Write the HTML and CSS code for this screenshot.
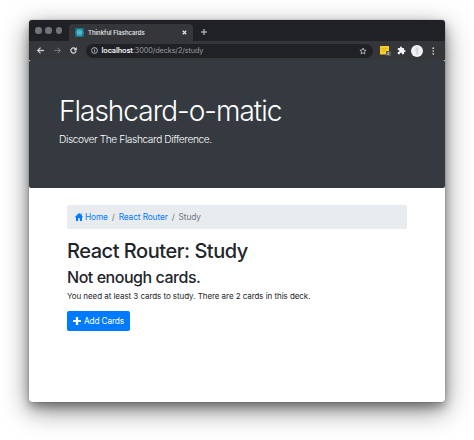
FILE: index.html
```html
<!DOCTYPE html>
<html lang="en">
<head>
  <meta charset="UTF-8" />
  <meta name="viewport" content="width=device-width, initial-scale=1.0" />
  <title>Thinkful Flashcards</title>
  <link rel="stylesheet" href="styles.css">
</head>
<body>
  <div class="window">
    <div class="tab-bar">
      <div class="lights"><i></i><i></i><i></i></div>
      <div class="tab">
        <svg class="favicon" viewBox="0 0 18 18">
          <rect width="18" height="18" rx="1" fill="#176d80" />
          <g fill="none" stroke="#68d3e8" stroke-width="1.2">
            <ellipse cx="9" cy="9" rx="7" ry="3" />
            <ellipse cx="9" cy="9" rx="7" ry="3" transform="rotate(60 9 9)" />
            <ellipse cx="9" cy="9" rx="7" ry="3" transform="rotate(120 9 9)" />
          </g>
          <circle cx="9" cy="9" r="2" fill="#68d3e8" />
        </svg>
        <span class="tab-title">Thinkful Flashcards</span>
        <svg class="tab-close" viewBox="0 0 10 10"><path d="M1.5 1.5l7 7m0-7l-7 7" stroke="#e8eaed" stroke-width="2.2" /></svg>
      </div>
      <svg class="new-tab" viewBox="0 0 12 12"><path d="M6 0v12M0 6h12" stroke="#d5d7da" stroke-width="2" /></svg>
    </div>
    <div class="toolbar">
      <svg class="nav-icon" viewBox="0 0 24 24"><path fill="#e8eaed" d="M21 11H6.8l5.6-5.6L11 4l-8 8 8 8 1.4-1.4L6.8 13H21z" stroke="#e8eaed" /></svg>
      <svg class="nav-icon" viewBox="0 0 24 24"><path fill="#85888c" d="M3 11h14.2l-5.6-5.6L13 4l8 8-8 8-1.4-1.4 5.6-5.6H3z" /></svg>
      <svg class="nav-icon" viewBox="0 0 24 24"><path fill="#e8eaed" stroke="#e8eaed" d="M17.7 6.3A8 8 0 1 0 19.7 14h-2.1A6 6 0 1 1 12 6c1.7 0 3.1.7 4.2 1.8L13 11h7V4z" /></svg>
      <div class="address">
        <svg class="info" viewBox="0 0 14 14"><circle cx="7" cy="7" r="5.8" fill="none" stroke="#d5d7da" stroke-width="1.6" /><path d="M7 6.2v4M7 3.6v1.5" stroke="#d5d7da" stroke-width="1.6" /></svg>
        <span class="url"><b>localhost</b>:3000/decks/2/study</span>
        <svg class="star" viewBox="0 0 24 24"><path fill="none" stroke="#c8cacd" stroke-width="2.4" stroke-linejoin="round" d="M12 3l2.6 6.2 6.7.6-5.1 4.4 1.6 6.6-5.8-3.5-5.8 3.5 1.6-6.6-5.1-4.4 6.7-.6z" /></svg>
      </div>
      <div class="note">
        <svg viewBox="0 0 18 18"><path fill="#f7ce27" d="M0 0h18v12l-5 5H0z" /><path d="M3 5h12M3 9h9" stroke="#d9ab14" stroke-width="1.5" /></svg>
        <span class="note-count">4</span>
      </div>
      <svg class="puzzle" viewBox="0 0 24 24"><path fill="#f1f3f4" d="M20.5 11H19V7a2 2 0 0 0-2-2h-4V3.500a2.500 2.500 0 0 0-5 0V5H4a2 2 0 0 0-2 2v3.800h1.500a2.700 2.700 0 0 1 0 5.400H2V20a2 2 0 0 0 2 2h3.800v-1.500a2.700 2.700 0 0 1 5.400 0V22H17a2 2 0 0 0 2-2v-4h1.500a2.500 2.500 0 0 0 0-5z" /></svg>
      <svg class="avatar" viewBox="0 0 12 12"><circle cx="6" cy="6" r="6" fill="#f0f1f2" /><path d="M5 2.500c2-1 3.500 1 2.500 3L7 9.500 5.500 10 5 7 4 5z" fill="#d4d7da" /></svg>
      <svg class="more" viewBox="0 0 4 14"><g fill="#d5d7da"><circle cx="2" cy="2" r="1.500" /><circle cx="2" cy="7" r="1.500" /><circle cx="2" cy="12" r="1.500" /></g></svg>
    </div>

    <header class="jumbotron">
      <h1>Flashcard-o-matic</h1>
      <p>Discover The Flashcard Difference.</p>
    </header>

    <main class="container">
      <nav class="breadcrumb">
        <a href="#">
          <svg class="home" viewBox="0 0 8 8"><path fill="#007bff" d="M4 0l1.700 1.600V.6h1v2L8 4 7.500 4.600 7 4.200V8H4.900V5.300H3.100V8H1V4.200l-.5.4L0 4z" /></svg><span>Home</span>
        </a>
        <span class="slash">/</span>
        <a href="#" class="deck">React Router</a>
        <span class="slash">/</span>
        <span class="active">Study</span>
      </nav>
      <h2>React Router: Study</h2>
      <h3>Not enough cards.</h3>
      <p>You need at least 3 cards to study. There are 2 cards in this deck.</p>
      <button type="button">
        <svg viewBox="0 0 8 8"><path d="M4 0v8M0 4h8" stroke="#fff" stroke-width="2.2" /></svg>
        <span>Add Cards</span>
      </button>
    </main>
  </div>
</body>
</html>
```
FILE: styles.css
```css
* { box-sizing: border-box; margin: 0; padding: 0; }
body {
  font-family: Inter, sans-serif;
  background: #fff; color: #212529;
  height: 440px; overflow: hidden;
  padding: 20px 29px 38px;
}
svg { display: block; flex: none; }
.window {
  width: 416px; height: 382px;
  background: #fff; border-radius: 3px;
  box-shadow: 0 0 1px rgba(0, 0, 0, 0.7), 0 8px 26px rgba(0, 0, 0, 0.5), 0 5px 10px rgba(0, 0, 0, 0.3);
  overflow: hidden;
}
.tab-bar {
  height: 21px; background: #1f2124;
  display: flex; align-items: flex-end;
}
.lights { display: flex; gap: 3.800px; width: 40px; padding: 0 0 7.500px 6px; }
.lights i { width: 6.500px; height: 6.500px; border-radius: 50%; background: #727376; }
.tab {
  width: 124px; height: 17px; padding: 0 6px;
  background: #35363a; border-radius: 4px 4px 0 0;
  display: flex; align-items: center;
}
.favicon { width: 9px; height: 9px; margin-right: 4px; }
.tab-title { color: #eceef0; font-size: 6px; font-weight: 500; letter-spacing: 0.02px; white-space: nowrap; }
.tab-close { width: 5px; height: 5px; margin-left: auto; }
.new-tab { width: 6px; height: 6px; margin: 0 0 6px 8px; }
.toolbar {
  height: 19px; background: #35363a;
  display: flex; align-items: center; padding-left: 7px;
}
.nav-icon { width: 9px; height: 9px; margin-right: 7.500px; }
.address {
  width: 287px; height: 14px; padding: 0 6px 0 5px;
  border-radius: 7px; background: #202124;
  display: flex; align-items: center;
}
.info { width: 7px; height: 7px; margin-right: 4px; }
.url { color: #9a9da1; font-size: 7.300px; letter-spacing: -0.11px; white-space: nowrap; }
.url b { color: #f1f3f4; font-weight: 600; }
.star { width: 8px; height: 8px; margin-left: auto; }
.note { position: relative; width: 9px; margin-left: 7px; }
.note svg { width: 9px; height: 9px; }
.note-count {
  position: absolute; left: 6px; top: 5px;
  width: 5px; height: 5px; border-radius: 1px;
  background: #55575c; color: #fff;
  font-size: 4px; line-height: 5px; text-align: center;
}
.puzzle { width: 9px; height: 9px; margin-left: 8px; }
.avatar { width: 12px; height: 12px; margin-left: 5px; }
.more { width: 2.500px; height: 8px; margin-left: 9.500px; }
.jumbotron {
  height: 128px; padding: 34px 30px 0;
  background: #343a40; color: #fff;
  border-radius: 2px;
}
.jumbotron h1 { font-size: 28px; font-weight: 300; line-height: 34px; letter-spacing: -1px; }
.jumbotron p { margin-top: 4px; font-size: 10.200px; font-weight: 300; line-height: 15px; letter-spacing: -0.41px; }
.container { padding: 17px 38px 0; }
.breadcrumb {
  height: 24px; padding: 0 8px;
  background: #e9ecef; border-radius: 2px;
  font-size: 8.300px; letter-spacing: -0.11px;
  display: flex; align-items: center; gap: 4px;
}
.breadcrumb a { color: #007bff; text-decoration: none; display: flex; align-items: center; gap: 2px; }
.slash, .active { color: #6c757d; }
.home { width: 8px; height: 8px; }
h2 { margin-top: 10px; font-size: 20px; font-weight: 500; line-height: 24px; letter-spacing: -0.47px; }
h3 { margin-top: 4px; font-size: 16px; font-weight: 500; line-height: 20px; letter-spacing: -0.46px; }
.container p { margin-top: 3px; font-size: 8px; line-height: 12px; letter-spacing: -0.06px; }
button {
  margin-top: 9px; width: 63px; height: 19.500px;
  border: none; border-radius: 2px;
  background: #007bff; color: #fff;
  font: 400 8.300px Inter, sans-serif; letter-spacing: -0.15px;
  display: flex; align-items: center; justify-content: center; gap: 3px;
}
button svg { width: 8px; height: 8px; }
```
